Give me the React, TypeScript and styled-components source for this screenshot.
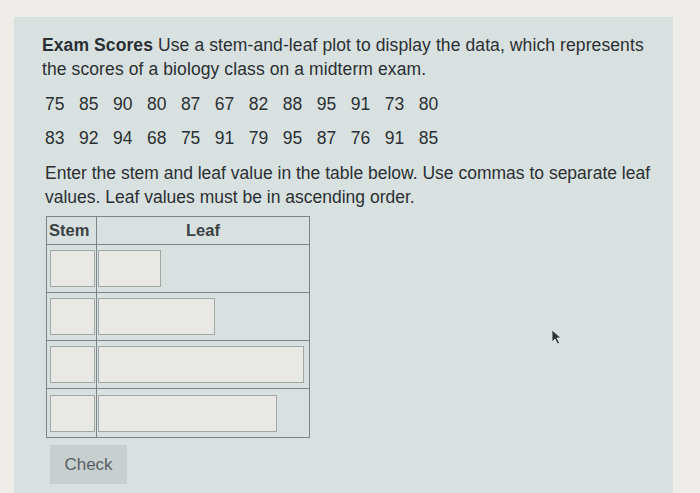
import { createGlobalStyle } from 'styled-components';
import styled from 'styled-components';

const GlobalStyle = createGlobalStyle`
	body {
		margin: 0;
		background: #eeede9;
		font-family: "Liberation Sans", Arial, sans-serif;
	}
`;

const Screen = styled.div`
	width: 700px;
	height: 493px;
	padding: 17px 0 0 14px;
	box-sizing: border-box;
	overflow: hidden;
	position: relative;
`;

const Panel = styled.main`
	width: 659px;
	height: 480px;
	box-sizing: border-box;
	background: #d8e1df;
	padding: 16px 0 0 28px;
	color: #2b2f33;
	font-size: 17.5px;
	line-height: 24px;
`;

const Intro = styled.p`
	margin: 0;
	width: 612px;
	letter-spacing: 0.1px;
`;

const NumberRow = styled.div`
	display: flex;
	gap: 14.5px;
	margin: 11px 0 0 3px;
	line-height: 24px;

	& + & {
		margin-top: 10px;
	}
`;

const Instructions = styled.p`
	margin: 11px 0 0 3px;
	width: 612px;
`;

const Table = styled.div`
	margin: 7px 0 0 4px;
	width: 262px;
	border: 1px solid #7e8586;
	display: grid;
	grid-template-columns: 50px 1fr;
	grid-template-rows: 28px repeat(4, 48px);
`;

const HeadCell = styled.div<{ $center?: boolean }>`
	font-weight: bold;
	color: #3b4044;
	font-size: 16.5px;
	line-height: 27px;
	padding-left: ${({ $center }) => ($center ? '0' : '2px')};
	text-align: ${({ $center }) => ($center ? 'center' : 'left')};
	border-bottom: 1px solid #7e8586;
	border-right: ${({ $center }) => ($center ? 'none' : '1px solid #7e8586')};
`;

const Cell = styled.div<{ $stem?: boolean; $last?: boolean }>`
	display: flex;
	align-items: center;
	padding-left: ${({ $stem }) => ($stem ? '3px' : '1px')};
	border-right: ${({ $stem }) => ($stem ? '1px solid #7e8586' : 'none')};
	border-bottom: ${({ $last }) => ($last ? 'none' : '1px solid #7e8586')};
`;

const Input = styled.div<{ $w: number }>`
	width: ${({ $w }) => $w}px;
	height: 37px;
	box-sizing: border-box;
	background: #e8e9e5;
	border: 1.5px solid #a2a7a6;
`;

const CheckButton = styled.button`
	margin: 7px 0 0 8px;
	width: 77px;
	height: 39px;
	border: none;
	background: #c7cfcf;
	color: #5b6064;
	font-family: "Liberation Sans", Arial, sans-serif;
	font-size: 17px;
`;

const Pointer = styled.svg`
	position: absolute;
	left: 551px;
	top: 329px;
`;

const rowOne = [75, 85, 90, 80, 87, 67, 82, 88, 95, 91, 73, 80];
const rowTwo = [83, 92, 94, 68, 75, 91, 79, 95, 87, 76, 91, 85];
const leafWidths = [63, 117, 206, 179];

export default function App() {
	return (
		<>
			<GlobalStyle />
			<Screen>
				<Panel>
					<Intro>
						<b>Exam Scores</b> Use a stem-and-leaf plot to display the data, which represents the scores of a biology class on a midterm exam.
					</Intro>

					<NumberRow>
						{rowOne.map((n, i) => <span key={i}>{n}</span>)}
					</NumberRow>
					<NumberRow>
						{rowTwo.map((n, i) => <span key={i}>{n}</span>)}
					</NumberRow>

					<Instructions>
						Enter the stem and leaf value in the table below. Use commas to separate leaf values. Leaf values must be in ascending order.
					</Instructions>

					<Table>
						<HeadCell>Stem</HeadCell>
						<HeadCell $center>Leaf</HeadCell>
						{leafWidths.map((w, i) => (
							<>
								<Cell key={`s${i}`} $stem $last={i === 3}>
									<Input $w={45} />
								</Cell>
								<Cell key={`l${i}`} $last={i === 3}>
									<Input $w={w} />
								</Cell>
							</>
						))}
					</Table>

					<CheckButton>Check</CheckButton>
				</Panel>

				<Pointer width="12" height="16" viewBox="0 0 12 16">
					<path d="M1 1 L1 13 L4 10 L6.5 15 L8.5 14 L6 9 L10 9 Z" fill="#2c3136" stroke="#e5ebea" strokeWidth="0.8" />
				</Pointer>
			</Screen>
		</>
	);
}
